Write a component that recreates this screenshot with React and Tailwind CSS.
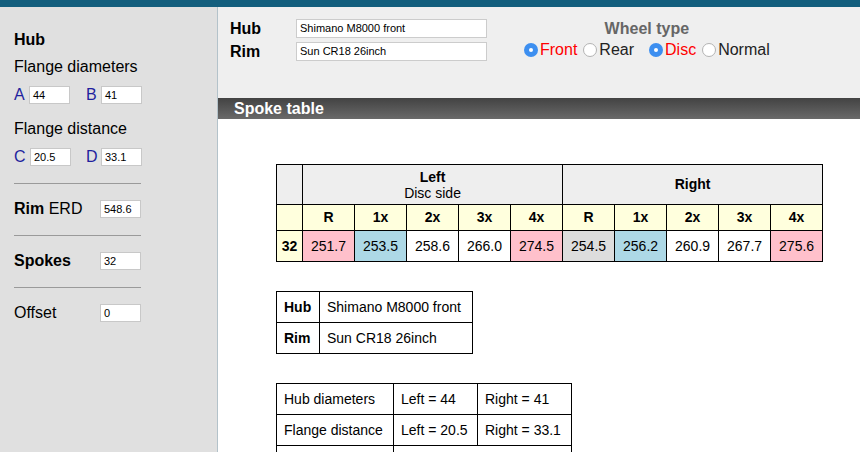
import React from 'react';

const Radio = ({ checked, label }) => (
    <label className="flex items-center">
        {checked ? (
            <span className="w-[14px] h-[14px] rounded-full bg-[#3d8ff0] flex items-center justify-center">
                <span className="w-[4px] h-[4px] rounded-full bg-white" />
            </span>
        ) : (
            <span className="w-[14px] h-[14px] rounded-full bg-white border border-[#b3b3b3]" />
        )}
        <span className={`ml-[2px] text-[16px] leading-[18px] ${checked ? 'text-[#ff0000]' : 'text-[#222]'}`}>{label}</span>
    </label>
);

const SmallInput = ({ value, className = '' }) => (
    <div className={`h-[18px] bg-white border border-[#c8c8c8] text-[11px] leading-[16px] pl-[3px] text-black ${className}`}>
        {value}
    </div>
);

const Rule = () => <div className="h-px bg-[#9a9a9a] w-[127px]" />;

const leftVals = [
    { v: '251.7', bg: 'bg-[#ffc0cb]' },
    { v: '253.5', bg: 'bg-[#add8e6]' },
    { v: '258.6', bg: 'bg-white' },
    { v: '266.0', bg: 'bg-white' },
    { v: '274.5', bg: 'bg-[#ffc0cb]' },
];
const rightVals = [
    { v: '254.5', bg: 'bg-[#dddddd]' },
    { v: '256.2', bg: 'bg-[#add8e6]' },
    { v: '260.9', bg: 'bg-white' },
    { v: '267.7', bg: 'bg-white' },
    { v: '275.6', bg: 'bg-[#ffc0cb]' },
];
const cross = ['R', '1x', '2x', '3x', '4x'];

export default function App() {
    return (
        <div className="h-[452px] overflow-hidden flex flex-col font-['Liberation_Sans',Arial,sans-serif] text-black">
            {/* top strip */}
            <div className="h-[7px] bg-[#135e7d] shrink-0" />

            <div className="flex flex-1 min-h-0">
                {/* Sidebar */}
                <div className="w-[218px] shrink-0 bg-[#e0e0e0] border-r border-[#b3c2ca] pl-[14px] pt-[24px]">
                    <div className="text-[16px] leading-[18px] font-bold">Hub</div>
                    <div className="mt-[9px] text-[16px] leading-[18px]">Flange diameters</div>
                    <div className="mt-[10px] flex items-center h-[18px]">
                        <span className="w-[15px] text-[16px] leading-[18px] text-[#1f1f9e]">A</span>
                        <SmallInput value="44" className="w-[41px]" />
                        <span className="ml-[16px] w-[15px] text-[16px] leading-[18px] text-[#1f1f9e]">B</span>
                        <SmallInput value="41" className="w-[41px]" />
                    </div>
                    <div className="mt-[16px] text-[16px] leading-[18px]">Flange distance</div>
                    <div className="mt-[10px] flex items-center h-[18px]">
                        <span className="w-[16px] text-[16px] leading-[18px] text-[#1f1f9e]">C</span>
                        <SmallInput value="20.5" className="w-[41px]" />
                        <span className="ml-[15px] w-[15px] text-[16px] leading-[18px] text-[#1f1f9e]">D</span>
                        <SmallInput value="33.1" className="w-[41px]" />
                    </div>
                    <div className="mt-[17px]"><Rule /></div>
                    <div className="mt-[16px] flex items-center h-[18px]">
                        <span className="w-[86px] text-[16px] leading-[18px]"><b>Rim</b> ERD</span>
                        <SmallInput value="548.6" className="w-[41px]" />
                    </div>
                    <div className="mt-[17px]"><Rule /></div>
                    <div className="mt-[16px] flex items-center h-[18px]">
                        <span className="w-[86px] text-[16px] leading-[18px] font-bold">Spokes</span>
                        <SmallInput value="32" className="w-[41px]" />
                    </div>
                    <div className="mt-[17px]"><Rule /></div>
                    <div className="mt-[16px] flex items-center h-[18px]">
                        <span className="w-[86px] text-[16px] leading-[18px]">Offset</span>
                        <SmallInput value="0" className="w-[41px]" />
                    </div>
                </div>

                {/* Main */}
                <div className="flex-1 min-w-0 bg-white">
                    <div className="h-[91px] bg-[#efefef] flex pl-[12px] pt-[12px]">
                        <div className="flex flex-col gap-[4px]">
                            <div className="flex items-center h-[19px]">
                                <span className="w-[66px] text-[16px] font-bold">Hub</span>
                                <div className="w-[191px] h-[19px] bg-white border border-[#cccccc] text-[11px] leading-[17px] pl-[3px]">Shimano M8000 front</div>
                            </div>
                            <div className="flex items-center h-[19px]">
                                <span className="w-[66px] text-[16px] font-bold">Rim</span>
                                <div className="w-[191px] h-[19px] bg-white border border-[#cccccc] text-[11px] leading-[17px] pl-[3px]">Sun CR18 26inch</div>
                            </div>
                        </div>
                        <div className="ml-[37px] mt-[1px] flex flex-col items-center">
                            <div className="text-[16px] leading-[18px] font-bold text-[#666666]">Wheel type</div>
                            <div className="mt-[3px] flex items-center">
                                <Radio checked label="Front" />
                                <span className="w-[6px]" />
                                <Radio label="Rear" />
                                <span className="w-[15px]" />
                                <Radio checked label="Disc" />
                                <span className="w-[6px]" />
                                <Radio label="Normal" />
                            </div>
                        </div>
                    </div>

                    <div className="h-[21px] bg-gradient-to-b from-[#434343] to-[#6a6a6a] pl-[16px] text-white font-bold text-[16px] leading-[21px]">
                        Spoke table
                    </div>

                    <div className="pl-[58px] pt-[45px]">
                        <table className="border-collapse table-fixed text-[14px] text-center w-[547px]">
                            <colgroup>
                                <col className="w-[26px]" />
                                {Array.from({ length: 10 }).map((_, i) => <col key={i} className="w-[52px]" />)}
                            </colgroup>
                            <thead>
                                <tr className="h-[40px] bg-[#eeeeee]">
                                    <th className="border border-black" />
                                    <th colSpan={5} className="border border-black leading-[16px]">
                                        <div className="font-bold">Left</div>
                                        <div className="font-normal">Disc side</div>
                                    </th>
                                    <th colSpan={5} className="border border-black font-bold">Right</th>
                                </tr>
                                <tr className="h-[26px] bg-[#ffffdd]">
                                    <th className="border border-black" />
                                    {cross.map((c) => <th key={'l' + c} className="border border-black font-bold">{c}</th>)}
                                    {cross.map((c) => <th key={'r' + c} className="border border-black font-bold">{c}</th>)}
                                </tr>
                            </thead>
                            <tbody>
                                <tr className="h-[31px]">
                                    <td className="border border-black bg-[#ffffdd] font-bold">32</td>
                                    {leftVals.map((c, i) => <td key={'lv' + i} className={`border border-black ${c.bg}`}>{c.v}</td>)}
                                    {rightVals.map((c, i) => <td key={'rv' + i} className={`border border-black ${c.bg}`}>{c.v}</td>)}
                                </tr>
                            </tbody>
                        </table>

                        <table className="mt-[29px] border-collapse text-[14px] text-left">
                            <tbody>
                                <tr className="h-[31px]">
                                    <td className="border border-black px-[7px] font-bold w-[43px]">Hub</td>
                                    <td className="border border-black px-[7px] w-[153px]">Shimano M8000 front</td>
                                </tr>
                                <tr className="h-[31px]">
                                    <td className="border border-black px-[7px] font-bold">Rim</td>
                                    <td className="border border-black px-[7px]">Sun CR18 26inch</td>
                                </tr>
                            </tbody>
                        </table>

                        <table className="mt-[29px] border-collapse text-[14px] text-left">
                            <tbody>
                                <tr className="h-[31px]">
                                    <td className="border border-black px-[7px] w-[117px]">Hub diameters</td>
                                    <td className="border border-black px-[7px] w-[84px]">Left = 44</td>
                                    <td className="border border-black px-[7px] w-[94px]">Right = 41</td>
                                </tr>
                                <tr className="h-[31px]">
                                    <td className="border border-black px-[7px]">Flange distance</td>
                                    <td className="border border-black px-[7px]">Left = 20.5</td>
                                    <td className="border border-black px-[7px]">Right = 33.1</td>
                                </tr>
                                {/* next row runs past the bottom of the window */}
                                <tr className="h-[31px]">
                                    <td className="border border-black px-[7px]" />
                                    <td colSpan={2} className="border border-black px-[7px]" />
                                </tr>
                            </tbody>
                        </table>
                    </div>
                </div>
            </div>
        </div>
    );
}
